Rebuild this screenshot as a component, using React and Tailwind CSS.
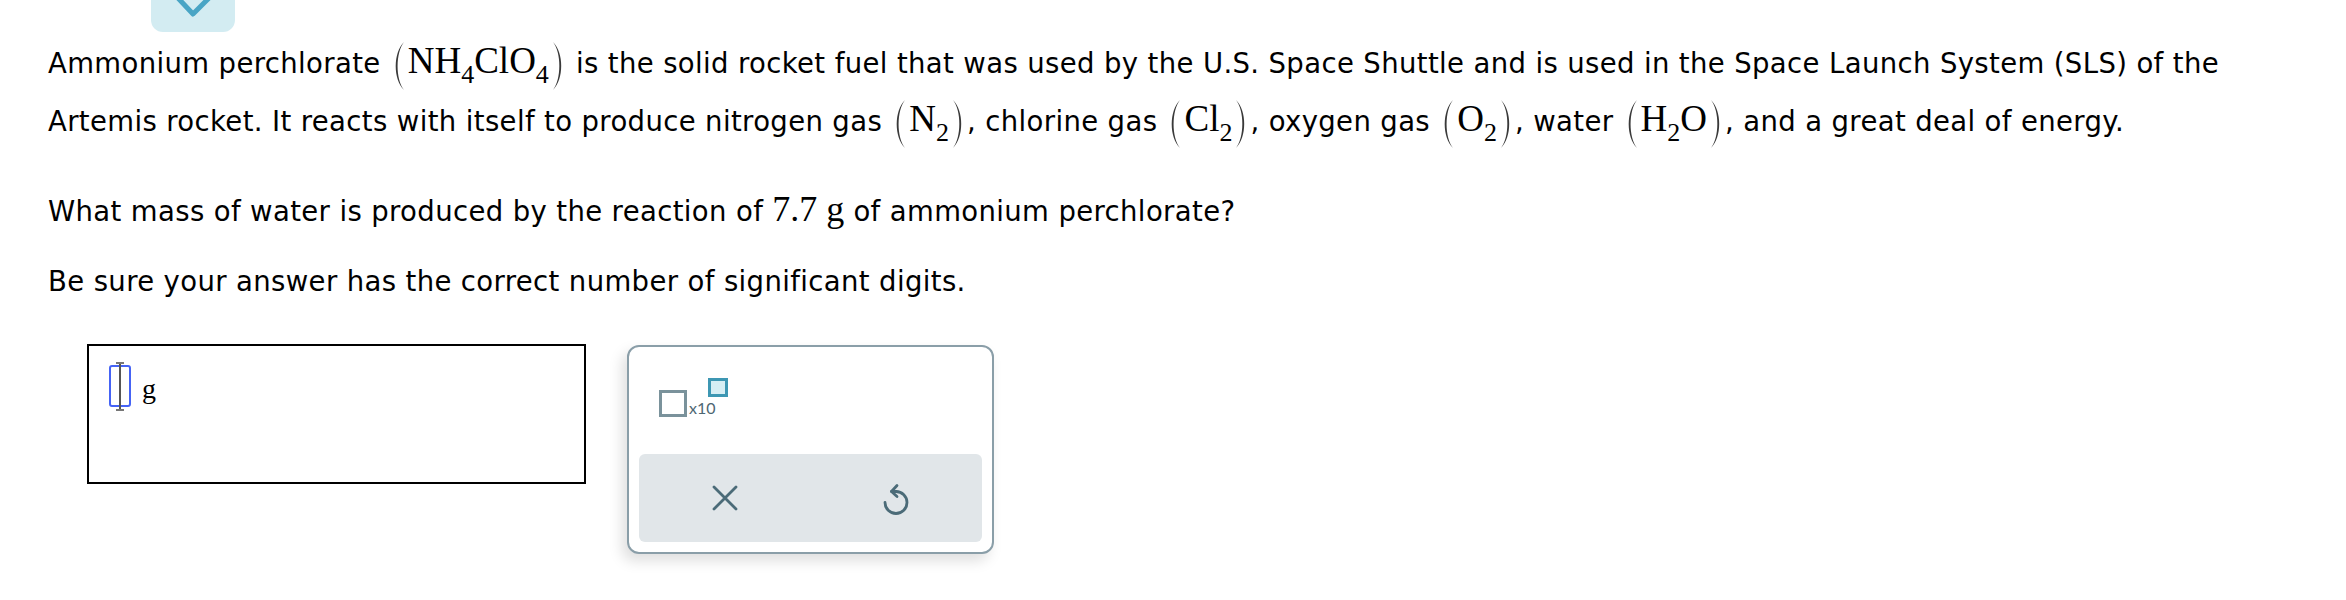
import React from "react";

const Paren = ({ right }) => (
  <svg width="18" height="50" viewBox="0 0 18 50" className="inline-block align-[-18px]">
    {right ? (
      <path d="M4 1 C15 12 15 38 4 49 C12.5 38 12.5 12 4 1Z" fill="#3a3a3a" />
    ) : (
      <path d="M14 1 C3 12 3 38 14 49 C5.5 38 5.5 12 14 1Z" fill="#3a3a3a" />
    )}
  </svg>
);

const Sub = ({ children }) => (
  <span className="relative top-[10px] text-[26px]">{children}</span>
);

const Formula = ({ children }) => (
  <span className="whitespace-nowrap">
    <Paren />
    <span className="font-['Liberation_Serif',serif] text-[37px] leading-none tracking-normal">{children}</span>
    <Paren right />
  </span>
);

export default function App() {
  return (
    <div className="min-h-[600px] bg-white text-black font-['DejaVu_Sans',Verdana,sans-serif] text-[27.5px] tracking-[0.37px]">
      <div className="ml-[151px] h-[32px] w-[84px] rounded-b-[12px] bg-[#d3ecf2] overflow-hidden">
        <svg width="84" height="32" viewBox="0 0 84 32">
          <path d="M26 -3 L42 14 L59 -3" fill="none" stroke="#49a5c5" strokeWidth="5" strokeLinecap="round" strokeLinejoin="round" />
        </svg>
      </div>

      <div className="pl-[48px]">
        <div className="mt-[7px] h-[48px] leading-[48px] whitespace-nowrap">
          Ammonium perchlorate{" "}
          <Formula>
            NH<Sub>4</Sub>ClO<Sub>4</Sub>
          </Formula>{" "}
          is the solid rocket fuel that was used by the U.S. Space Shuttle and is used in the Space Launch System (SLS) of the
        </div>
        <div className="mt-[10px] h-[48px] leading-[48px] whitespace-nowrap">
          Artemis rocket. It reacts with itself to produce nitrogen gas{" "}
          <Formula>
            N<Sub>2</Sub>
          </Formula>
          , chlorine gas{" "}
          <Formula>
            Cl<Sub>2</Sub>
          </Formula>
          , oxygen gas{" "}
          <Formula>
            O<Sub>2</Sub>
          </Formula>
          , water{" "}
          <Formula>
            H<Sub>2</Sub>O
          </Formula>
          , and a great deal of energy.
        </div>

        <div className="mt-[42px] h-[48px] leading-[48px] whitespace-nowrap">
          What mass of water is produced by the reaction of{" "}
          <span className="font-['Liberation_Serif',serif] text-[36px] leading-none tracking-normal">7.7 g</span> of ammonium perchlorate?
        </div>

        <div className="mt-[22px] h-[48px] leading-[48px] whitespace-nowrap">
          Be sure your answer has the correct number of significant digits.
        </div>
      </div>

      <div className="mt-[39px] flex items-start tracking-normal">
        <div className="ml-[87px] w-[499px] h-[140px] border-2 border-black">
          <div className="flex items-start pl-[20px] pt-[19px]">
            <div className="relative w-[22px] h-[42px] border-2 border-[#4563f5] rounded-[3px]">
              <div className="absolute left-[8px] top-[-4px] bottom-[-5px] w-[2px] bg-[#555555]" />
              <div className="absolute left-[5px] top-[-5px] w-[8px] h-[2px] bg-[#777777]" />
              <div className="absolute left-[5px] bottom-[-6px] w-[8px] h-[2px] bg-[#777777]" />
            </div>
            <span className="ml-[11px] mt-[10px] font-['Liberation_Serif',serif] text-[28px] leading-none">g</span>
          </div>
        </div>

        <div className="ml-[41px] mt-[1px] w-[367px] h-[209px] border-2 border-[#8a9ea8] rounded-[12px] bg-white p-[10px] flex flex-col shadow-[-5px_7px_14px_rgba(0,0,0,0.13)]">
          <div className="h-[97px]">
            <div className="flex items-start pl-[20px] pt-[21px]">
              <div className="mt-[12px] w-[28px] h-[27px] border-[3px] border-[#7a929b]" />
              <span className="ml-[2px] mt-[22px] font-['Lato',sans-serif] text-[16px] leading-none text-[#4d6672]">x10</span>
              <div className="-ml-[8px] w-[20px] h-[19px] border-[3px] border-[#3d97b3] bg-[#d6eef4]" />
            </div>
          </div>
          <div className="h-[88px] rounded-[6px] bg-[#e1e6e9] grid grid-cols-2">
            <div className="flex items-center justify-center">
              <svg width="26" height="26" viewBox="0 0 26 26">
                <path d="M2 2 L24 24 M24 2 L2 24" fill="none" stroke="#4b6b78" strokeWidth="2.8" strokeLinecap="round" />
              </svg>
            </div>
            <div className="flex items-center justify-center">
              <svg width="28" height="34" viewBox="0 0 28 34" className="mt-[2px]">
                <path d="M14 9.5 A11 11 0 1 1 3 20.5" fill="none" stroke="#4b6b78" strokeWidth="2.8" strokeLinecap="round" />
                <path d="M15 3.5 L9.5 9.5 L15 14.5" fill="none" stroke="#4b6b78" strokeWidth="2.8" strokeLinecap="round" strokeLinejoin="round" />
                <path d="M9.5 9.5 L14 9.5" fill="none" stroke="#4b6b78" strokeWidth="2.8" strokeLinecap="round" />
              </svg>
            </div>
          </div>
        </div>
      </div>
    </div>
  );
}
